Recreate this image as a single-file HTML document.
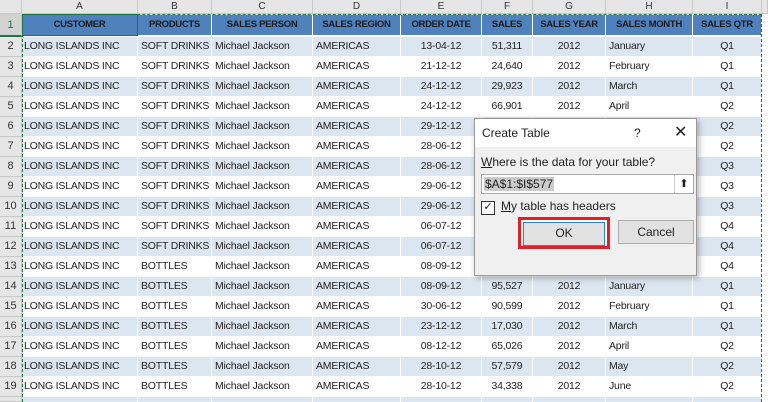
<!DOCTYPE html>
<html style="overflow:hidden;height:402px"><head><style>
body{margin:0;width:768px;height:402px;overflow:hidden;background:#fff;font-family:"Liberation Sans",Arial,sans-serif;position:relative}
.c{position:absolute;box-sizing:border-box;font-size:10.5px;color:#222;white-space:nowrap;overflow:hidden;line-height:19px;letter-spacing:-0.2px}
.hd{position:absolute;top:0;height:14px;background:#e6e6e6;border-right:1px solid #c8c8c8;border-bottom:1px solid #c8c8c8;box-sizing:border-box;font-size:10px;color:#333;text-align:center;line-height:13px}
.rn{position:absolute;left:0;width:22px;background:#e6e6e6;border-bottom:1px solid #c8c8c8;border-right:1px solid #c8c8c8;box-sizing:border-box;font-size:11px;color:#333;text-align:center}
</style></head><body>
<div id="g"></div>
<div style="position:absolute;left:474px;top:118px;width:223px;height:158px;background:#f0f0f0;border:1px solid #999;box-sizing:border-box;box-shadow:2px 2px 6px rgba(0,0,0,.3);font-family:'Liberation Sans',sans-serif;font-size:12px;color:#222">
 <div style="height:28px;background:#fff;position:relative"><span style="position:absolute;left:7px;top:7px">Create Table</span><span style="position:absolute;left:159px;top:7px">?</span><span style="position:absolute;left:199px;top:3px;font-size:16px">✕</span></div>
 <div style="position:absolute;left:6px;top:36px"><u>W</u>here is the data for your table?</div>
 <div style="position:absolute;left:6px;top:55px;width:213px;height:20px;background:#fff;border:1px solid #aaa;box-sizing:border-box"><span style="position:absolute;left:2px;top:2px;background:#ccc;padding:0 1px;line-height:14px">$A$1:$I$577</span><div style="position:absolute;right:0;top:0;width:18px;height:18px;border-left:1px solid #ccc;text-align:center;font-size:11px;line-height:18px">⬆</div></div>
 <div style="position:absolute;left:6px;top:82px;width:12px;height:12px;border:1px solid #333;background:#fff;font-size:11px;line-height:11px;text-align:center">✓</div>
 <div style="position:absolute;left:26px;top:80px"><u>M</u>y table has headers</div>
 <div style="position:absolute;left:43px;top:98px;width:92px;height:32px;border:3px solid #e0202a;box-sizing:border-box;background:#fff"><div style="margin:2px;height:22px;border:1px solid #2d7fd4;background:#e1e1e1;text-align:center;line-height:21px">OK</div></div>
 <div style="position:absolute;left:143px;top:101px;width:76px;height:24px;border:1px solid #adadad;background:#e1e1e1;box-sizing:border-box;text-align:center;line-height:22px">Cancel</div>
</div>
<script>
var cols=[[22,138,'A','CUSTOMER','l'],[138,212,'B','PRODUCTS','l'],[212,313,'C','SALES PERSON','l'],[313,401,'D','SALES REGION','l'],[401,482,'E','ORDER DATE','c'],[482,533,'F','SALES','c'],[533,606,'G','SALES YEAR','c'],[606,693,'H','SALES MONTH','l'],[693,762,'I','SALES QTR','c']];
var d=[['13-04-12','51,311','January','Q1'],['21-12-12','24,640','February','Q1'],['24-12-12','29,923','March','Q1'],['24-12-12','66,901','April','Q2'],['29-12-12','41,214','May','Q2'],['28-06-12','35,118','June','Q2'],['28-06-12','62,340','July','Q3'],['29-06-12','48,722','August','Q3'],['29-06-12','71,903','September','Q3'],['06-07-12','54,186','October','Q4'],['06-07-12','86,257','November','Q4'],['08-09-12','87,868','December','Q4'],['08-09-12','95,527','January','Q1'],['30-06-12','90,599','February','Q1'],['23-12-12','17,030','March','Q1'],['08-12-12','65,026','April','Q2'],['28-10-12','57,579','May','Q2'],['28-10-12','34,338','June','Q2']];
var h='';
h+='<div class="hd" style="left:0;width:22px"></div>';
cols.forEach(c=>{h+='<div class="hd" style="left:'+c[0]+'px;width:'+(c[1]-c[0])+'px">'+c[2]+'</div>'});
h+='<div class="hd" style="left:762px;width:6px"></div>';
h+='<div class="rn" style="top:14px;height:23px;line-height:22px;color:#217346;background:#d2d2d2;border-bottom:2px solid #217346">1</div>';
cols.forEach(c=>{h+='<div class="c" style="left:'+c[0]+'px;top:15px;width:'+(c[1]-c[0]-1)+'px;height:20px;background:#4f81bd;font-weight:bold;text-align:center;color:#1a1a1a;font-size:9.5px;letter-spacing:-0.3px">'+c[3]+'</div>'});
for(var i=0;i<18;i++){var r=i+2,t=37+i*20;var bg=(r%2==0)?'#dce6f1':'#fff';
var hh=(i==17)?5:19;
h+='<div class="rn" style="top:'+t+'px;height:20px;line-height:19px">'+r+'</div>';
var v=['LONG ISLANDS INC',i<11?'SOFT DRINKS':'BOTTLES','Michael Jackson','AMERICAS',d[i][0],d[i][1],'2012',d[i][2],d[i][3]];
cols.forEach((c,k)=>{h+='<div class="c" style="left:'+c[0]+'px;top:'+t+'px;width:'+(c[1]-c[0]-1)+'px;height:19px;background:'+bg+';text-align:'+(c[4]=='c'?'center':'left')+';padding-left:'+(c[4]=='l'?(k==0?2:3):0)+'px">'+v[k]+'</div>'});}
h+='<div class="rn" style="top:397px;height:5px"></div>';
cols.forEach(c=>{h+='<div class="c" style="left:'+c[0]+'px;top:397px;width:'+(c[1]-c[0]-1)+'px;height:5px;background:#dce6f1"></div>'});
h+='<div style="position:absolute;left:22px;top:14px;width:1px;height:388px;border-left:1px dashed #217346"></div>';
h+='<div style="position:absolute;left:761px;top:14px;width:1px;height:388px;border-left:1px dashed #217346"></div>';
h+='<div style="position:absolute;left:22px;top:14px;width:740px;height:1px;border-top:1px dashed #217346"></div>';
h+='<div style="position:absolute;left:22px;top:14px;width:116px;height:22px;border:1px solid #217346;box-sizing:border-box"></div>';
document.getElementById('g').innerHTML=h;
</script>
</body></html>
